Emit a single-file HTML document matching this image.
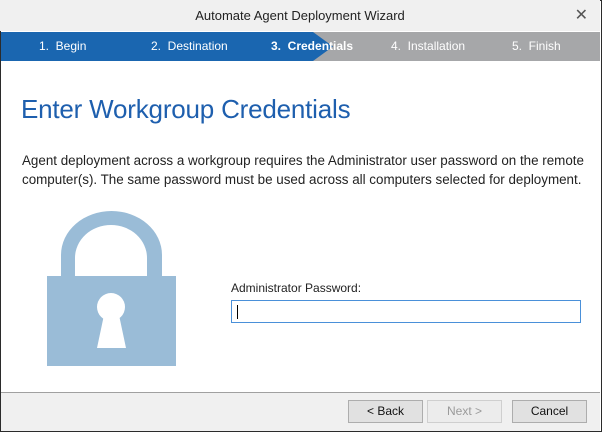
<!DOCTYPE html><html><head><style>
*{margin:0;padding:0;box-sizing:border-box}
body{width:602px;height:432px;overflow:hidden;font-family:"Liberation Sans",sans-serif;background:#fff;position:relative}
.win{position:absolute;left:0;top:0;width:602px;height:432px;border:1px solid #2b2b2b;}
.title{position:absolute;left:0;top:0;width:600px;height:31px;background:#f0f0f0;text-align:center;font-size:13px;line-height:31px;color:#222}
.x{position:absolute;right:12px;top:0;font-size:16px;color:#555}
.steps{position:absolute;left:1px;top:32px;width:599px;height:29px;background:#a6a7a9;color:#fff;font-size:12px}
.s{position:absolute;top:0;line-height:29px}
.h{position:absolute;left:21px;top:94px;font-size:26px;color:#1e5fae;font-weight:300;letter-spacing:-0.2px}
.p{position:absolute;left:22px;top:151px;font-size:13.4px;line-height:19px;color:#222;width:580px}
.lbl{position:absolute;left:231px;top:281px;font-size:12px;color:#222}
.inp{position:absolute;left:231px;top:300px;width:350px;height:23px;border:1px solid #4a90d9}
.caret{position:absolute;left:5px;top:4px;width:1px;height:14px;background:#000}
.foot{position:absolute;left:1px;top:392px;width:599px;height:39px;background:#f0f0f0;border-top:1px solid #a0a0a0}
.b{position:absolute;top:400px;height:23px;width:75px;border:1px solid #adadad;background:#e1e1e1;font-size:12px;text-align:center;line-height:21px;color:#111}
</style></head><body><div class="win"></div>
<div class="title">Automate Agent Deployment Wizard<span class="x">✕</span></div>
<div class="steps">
<svg width="340" height="29" style="position:absolute;left:0;top:0"><polygon points="0,0 312,0 332,14.5 312,29 0,29" fill="#1a66b0"/></svg>
<span class="s" style="left:38px">1.&nbsp; Begin</span>
<span class="s" style="left:150px">2.&nbsp; Destination</span>
<span class="s" style="left:270px;font-weight:bold">3.&nbsp; Credentials</span>
<span class="s" style="left:390px">4.&nbsp; Installation</span>
<span class="s" style="left:511px">5.&nbsp; Finish</span>
</div>
<div class="h">Enter Workgroup Credentials</div>
<div class="p">Agent deployment across a workgroup requires the Administrator user password on the remote computer(s). The same password must be used across all computers selected for deployment.</div>
<svg width="200" height="170" style="position:absolute;left:0;top:200px">
<path d="M61,76 V55 A50.5,44 0 0 1 162,55 V76 H147 V58 A36,33 0 0 0 75,58 V76 Z" fill="#9abcd7"/>
<rect x="47" y="76" width="129" height="90" fill="#9abcd7"/>
<ellipse cx="111" cy="107" rx="14" ry="14" fill="#fff"/>
<polygon points="104,115 119,115 126,148 97,148" fill="#fff"/>
</svg>
<div class="lbl">Administrator Password:</div>
<div class="inp"><div class="caret"></div></div>
<div class="foot"></div>
<div class="b" style="left:348px">&lt; Back</div>
<div class="b" style="left:427px;color:#9a9a9a;background:#ececec;border-color:#cfcfcf">Next &gt;</div>
<div class="b" style="left:512px">Cancel</div>
</body></html>
